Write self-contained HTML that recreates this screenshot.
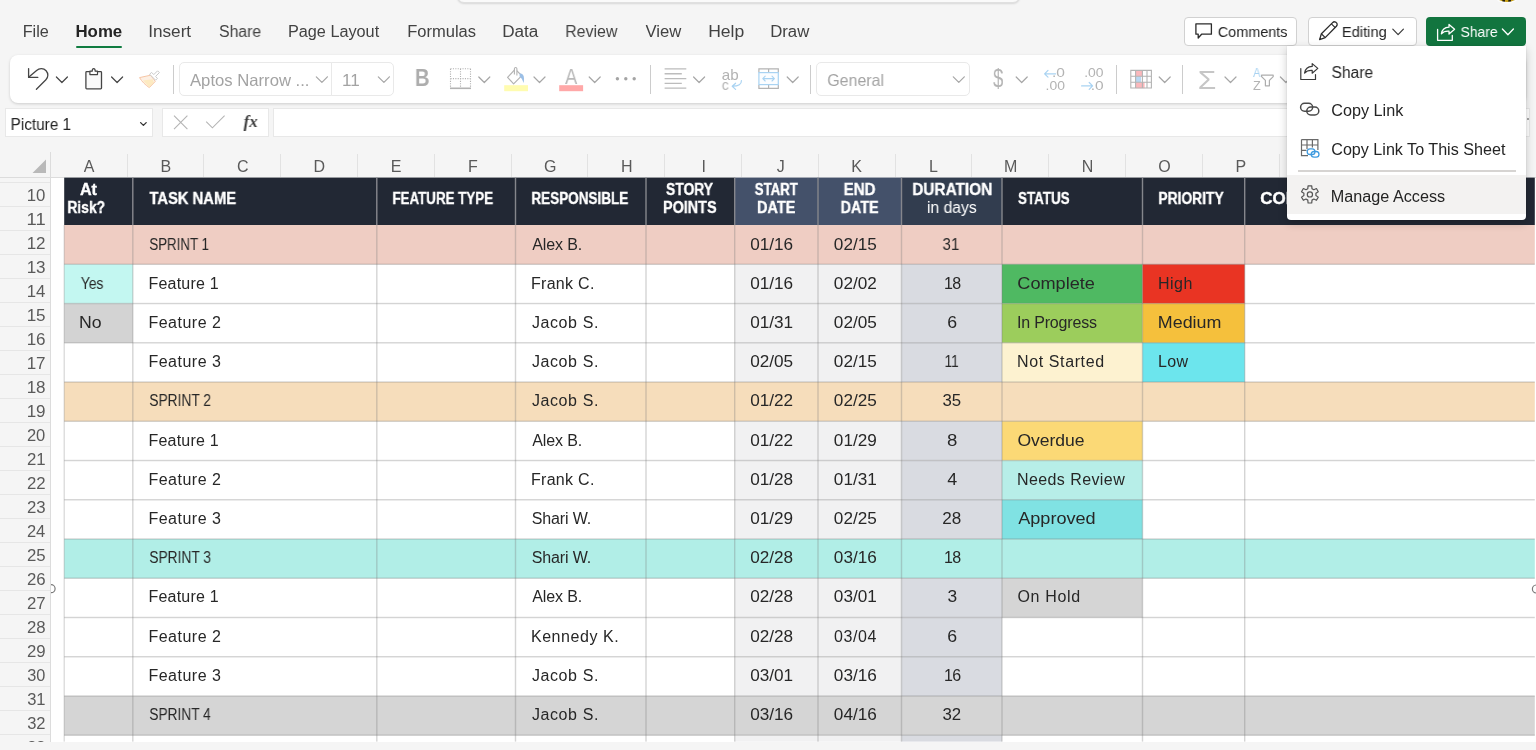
<!DOCTYPE html>
<html lang="en">
<head>
<meta charset="utf-8">
<title>Excel - Sprint Plan</title>
<style>
html,body{margin:0;padding:0;}
body{width:1536px;height:750px;overflow:hidden;background:#f5f5f5;font-family:"Liberation Sans",sans-serif;}
#app{position:relative;width:1536px;height:750px;overflow:hidden;background:#f5f5f5;}
#app div,#app span.t,#app svg{position:absolute;}
span.t{left:0;top:0;white-space:pre;transform-origin:0 50%;display:block;will-change:transform;}
#menu span.t{}
span.hb{-webkit-text-stroke:0.35px #fff;}

</style>
</head>
<body>
<div id="app">
<div style="left:457px;top:-30px;width:563px;height:33px;background:#fafafa;border:1px solid #e0e0e0;border-radius:7px;box-shadow:0 1px 2px rgba(0,0,0,.12);box-sizing:border-box"></div>
<div style="left:1491px;top:-30.5px;width:32px;height:32px;border-radius:50%;background:repeating-linear-gradient(90deg,#2a2205 0 2px,#c9a013 2px 4.5px,#5a4a08 4.5px 6px);box-shadow:0 0 0 1.5px #fbfbfb"></div>
<span class="t" style="font-size:16px;line-height:20px;color:#424242;transform:translate(22.63px,22px) scaleX(1.0133);">File</span>
<span class="t" style="font-size:16px;line-height:20px;color:#424242;transform:translate(148.16px,22px) scaleX(1.0742);">Insert</span>
<span class="t" style="font-size:16px;line-height:20px;color:#424242;transform:translate(219.01px,22px) scaleX(0.9868);">Share</span>
<span class="t" style="font-size:16px;line-height:20px;color:#424242;transform:translate(287.93px,22px) scaleX(1.0152);">Page Layout</span>
<span class="t" style="font-size:16px;line-height:20px;color:#424242;transform:translate(407.21px,22px) scaleX(1.0319);">Formulas</span>
<span class="t" style="font-size:16px;line-height:20px;color:#424242;transform:translate(502.16px,22px) scaleX(1.0720);">Data</span>
<span class="t" style="font-size:16px;line-height:20px;color:#424242;transform:translate(565.26px,22px) scaleX(0.9921);">Review</span>
<span class="t" style="font-size:16px;line-height:20px;color:#424242;transform:translate(645.50px,22px) scaleX(1.0409);">View</span>
<span class="t" style="font-size:16px;line-height:20px;color:#424242;transform:translate(708.13px,22px) scaleX(1.0965);">Help</span>
<span class="t" style="font-size:16px;line-height:20px;color:#424242;transform:translate(770.19px,22px) scaleX(1.0474);">Draw</span>
<span class="t" style="font-size:16px;line-height:20px;color:#242424;font-weight:700;transform:translate(75.45px,22px) scaleX(1.0522);">Home</span>
<div style="left:76px;top:45.5px;width:45.5px;height:2.5px;background:#107c41;border-radius:1px;"></div>
<div style="left:1184px;top:17px;width:113px;height:28.5px;background:#fff;box-sizing:border-box;border:1px solid #d1d1d1;border-radius:4px;"></div>
<div style="left:1308px;top:17px;width:108.5px;height:28.5px;background:#fff;box-sizing:border-box;border:1px solid #d1d1d1;border-radius:4px;"></div>
<div style="left:1426px;top:17px;width:100px;height:28.5px;background:#12753f;border-radius:4px;"></div>
<span class="t" style="font-size:15px;line-height:19px;color:#242424;transform:translate(1217.82px,22px) scaleX(0.9601);">Comments</span>
<span class="t" style="font-size:15px;line-height:19px;color:#242424;transform:translate(1341.85px,22px) scaleX(0.9806);">Editing</span>
<span class="t" style="font-size:15px;line-height:19px;color:#fff;transform:translate(1460.57px,22px) scaleX(0.9243);">Share</span>
<div style="left:10px;top:55px;width:1516px;height:48px;background:#fff;border-radius:8px;box-shadow:0 1px 3px rgba(0,0,0,.17);"></div>
<div style="left:173px;top:65px;width:1px;height:28.5px;background:#cccccc;"></div>
<div style="left:650px;top:65px;width:1px;height:28.5px;background:#cccccc;"></div>
<div style="left:810px;top:65px;width:1px;height:28.5px;background:#cccccc;"></div>
<div style="left:1116px;top:65px;width:1px;height:28.5px;background:#cccccc;"></div>
<div style="left:1182px;top:65px;width:1px;height:28.5px;background:#cccccc;"></div>
<div style="left:179px;top:62px;width:153px;height:34px;background:#fff;box-sizing:border-box;border:1px solid #e9e9e9;border-radius:5px 0 0 5px;"></div>
<div style="left:331px;top:62px;width:63px;height:34px;background:#fff;box-sizing:border-box;border:1px solid #e9e9e9;border-radius:0 5px 5px 0;"></div>
<div style="left:816px;top:62px;width:154px;height:34px;background:#fff;box-sizing:border-box;border:1px solid #e9e9e9;border-radius:5px;"></div>
<span class="t" style="font-size:16.5px;line-height:21px;color:#a3a3a3;transform:translate(190.00px,70px) scaleX(1.0103);">Aptos Narrow ...</span>
<span class="t" style="font-size:16.5px;line-height:21px;color:#a3a3a3;transform:translate(341.93px,70px) scaleX(1.0370);">11</span>
<span class="t" style="font-size:16.5px;line-height:21px;color:#a3a3a3;transform:translate(827.25px,70px) scaleX(0.9676);">General</span>
<span class="t" style="font-size:23.5px;line-height:29px;color:#adadad;font-weight:700;transform:translate(414.94px,64px) scaleX(0.8579);">B</span>
<svg style="left:0;top:55px" width="1536" height="50" viewBox="0 55 1536 50" fill="none">
<path d="M28.6 68.6V77.4H37.8" stroke="#454545" stroke-width="1.3" stroke-linecap="round" stroke-linejoin="round"/>
<path d="M28.9 77.1L36.6 70.4C39.4 67.9 43.6 68 46.1 70.7C48.5 73.3 48.4 77.3 45.9 79.8L36.4 89.3" stroke="#454545" stroke-width="1.3" stroke-linecap="round" stroke-linejoin="round"/>
<path d="M56.4 77.0L61.9 82.5L67.4 77.0" fill="none" stroke="#454545" stroke-width="1.2" stroke-linecap="round" stroke-linejoin="round"/>
<rect x="85.9" y="71.6" width="15.6" height="17.3" rx="0.8" fill="#fafafa" stroke="#454545" stroke-width="1.3"/>
<path d="M89.9 74.6V71.2H92.2C92.2 69.6 93 68.6 93.7 68.6C94.4 68.6 95.2 69.6 95.2 71.2H97.5V74.6Z" fill="#fff" stroke="#454545" stroke-width="1.2" stroke-linejoin="round"/>
<path d="M111.6 77.0L117.1 82.5L122.6 77.0" fill="none" stroke="#454545" stroke-width="1.2" stroke-linecap="round" stroke-linejoin="round"/>
<path d="M139.5 77.6L150.6 75.2L155.3 81.4L149.3 87.6C146 85.5 141.8 81.6 139.5 77.6Z" fill="#fdf0e4" stroke="#f6c6a6" stroke-width="1"/>
<path d="M143 80.6L152.6 79.2L153.8 82.6L149.2 87.2Z" fill="#fde9b8" opacity=".8"/>
<path d="M149.6 74.2L151.6 72.4L153.8 74.6L157.6 70.8L159.4 72.6L155.6 76.4L157.4 78.4L155.6 80.2Z" fill="#fff" stroke="#c9c9c9" stroke-width="1" stroke-linejoin="round"/>
<path d="M316.3 76.8L321.9 82.4L327.4 76.8" fill="none" stroke="#a6a6a6" stroke-width="1.2" stroke-linecap="round" stroke-linejoin="round"/>
<path d="M378.3 76.8L383.9 82.4L389.4 76.8" fill="none" stroke="#a6a6a6" stroke-width="1.2" stroke-linecap="round" stroke-linejoin="round"/>
<path d="M450.5 68.8H470.5M450.5 78.6H470.5M450.5 68.8V87.6M460.5 68.8V87.6M470.5 68.8V87.6" stroke="#b3b3b3" stroke-width="1.1" stroke-dasharray="1.1 1.3"/>
<path d="M450 88.3H471" stroke="#b3b3b3" stroke-width="1.6"/>
<path d="M478.8 77.0L484.3 82.5L489.8 77.0" fill="none" stroke="#a6a6a6" stroke-width="1.2" stroke-linecap="round" stroke-linejoin="round"/>
<path d="M515.2 69.2L507.6 77.4L513.6 83.8L521.8 75.6L515.2 69.2" stroke="#b3b3b3" stroke-width="1.2" stroke-linejoin="round"/>
<path d="M514.4 74.6V68.8C514.4 67 516.9 67 516.9 68.8V75.4" stroke="#b3b3b3" stroke-width="1.1" fill="#fff"/>
<path d="M519.6 73.6C522.4 73.4 524 75.4 524 78.4C524 80.6 523.8 82 523.4 83C522.8 80.2 521.6 78 519.6 76.6Z" fill="#9bbfe6"/>
<rect x="504.2" y="85.2" width="23.8" height="6" fill="#fffcb0"/>
<path d="M534.0 77.0L539.5 82.5L545.0 77.0" fill="none" stroke="#a6a6a6" stroke-width="1.2" stroke-linecap="round" stroke-linejoin="round"/>
<rect x="559.2" y="85.2" width="23.9" height="6" fill="#ffa8a8"/>
<path d="M589.2 77.0L594.7 82.5L600.2 77.0" fill="none" stroke="#a6a6a6" stroke-width="1.2" stroke-linecap="round" stroke-linejoin="round"/>
<circle cx="617.4" cy="78.7" r="1.7" fill="#a4a4a4"/>
<circle cx="625.8" cy="78.7" r="1.7" fill="#a4a4a4"/>
<circle cx="634.2" cy="78.7" r="1.7" fill="#a4a4a4"/>
<path d="M664.6 68.9H686.3M664.6 73.75H681.8M664.6 78.6H686.3M664.6 83.4H681.8M664.6 88.2H686.3" stroke="#bcbcbc" stroke-width="1.3"/>
<path d="M693.6 77.0L699.1 82.5L704.6 77.0" fill="none" stroke="#a6a6a6" stroke-width="1.2" stroke-linecap="round" stroke-linejoin="round"/>
<path d="M741.4 80.6C741.6 84.2 738.6 86.2 732.6 86.2M735.6 83.2L732.2 86.2L735.6 89.4" stroke="#a9d3f2" stroke-width="1.2" stroke-linecap="round" stroke-linejoin="round"/>
<path d="M758.9 72.4V68.9H778.3V72.4M768.6 68.9V72.4M758.9 84.8V88.3H778.3V84.8M768.6 84.8V88.3" stroke="#b3b3b3" stroke-width="1.2"/>
<rect x="758.9" y="72.6" width="19.4" height="12" fill="#fbfdff" stroke="#a9d3f2" stroke-width="1.2"/>
<path d="M762.8 78.6H774.4M765.2 76.2L762.8 78.6L765.2 81M772 76.2L774.4 78.6L772 81" stroke="#a9d3f2" stroke-width="1.1" stroke-linecap="round" stroke-linejoin="round"/>
<path d="M787.2 77.0L792.7 82.5L798.2 77.0" fill="none" stroke="#a6a6a6" stroke-width="1.2" stroke-linecap="round" stroke-linejoin="round"/>
<path d="M953.3 76.8L958.8 82.4L964.3 76.8" fill="none" stroke="#a6a6a6" stroke-width="1.2" stroke-linecap="round" stroke-linejoin="round"/>
<path d="M1016.2 77.0L1021.7 82.5L1027.2 77.0" fill="none" stroke="#a6a6a6" stroke-width="1.2" stroke-linecap="round" stroke-linejoin="round"/>
<path d="M1044.6 73.8H1055.6M1048 70.4L1044.6 73.8L1048 77.2" stroke="#a9d3f2" stroke-width="1.2" stroke-linecap="round" stroke-linejoin="round"/>
<path d="M1081.6 85.9H1092.6M1089.2 82.5L1092.6 85.9L1089.2 89.3" stroke="#a9d3f2" stroke-width="1.2" stroke-linecap="round" stroke-linejoin="round"/>
<rect x="1135.6" y="70.4" width="6.6" height="6" fill="#fbb8bc"/><rect x="1135.6" y="76.6" width="5.4" height="5.6" fill="#b9d8f3"/><rect x="1135.6" y="82.4" width="9" height="5.8" fill="#fbb8bc"/>
<path d="M1130.8 70.4H1151.4V88H1130.8ZM1130.8 76.3H1151.4M1130.8 82.2H1151.4M1135.6 70.4V88M1142.4 70.4V88M1147 70.4V88" stroke="#b3b3b3" stroke-width="1.1"/>
<path d="M1159.2 77.0L1164.7 82.5L1170.2 77.0" fill="none" stroke="#a6a6a6" stroke-width="1.2" stroke-linecap="round" stroke-linejoin="round"/>
<path d="M1225.0 77.0L1230.5 82.5L1236.0 77.0" fill="none" stroke="#a6a6a6" stroke-width="1.2" stroke-linecap="round" stroke-linejoin="round"/>
<path d="M1261.6 75.2H1273.2V76.6L1269.4 80.4V85.8H1265.4V80.4L1261.6 76.6Z" fill="#fff" stroke="#adadad" stroke-width="1.2" stroke-linejoin="round"/>
<path d="M1280.4 77.0L1285.9 82.5L1291.4 77.0" fill="none" stroke="#a6a6a6" stroke-width="1.2" stroke-linecap="round" stroke-linejoin="round"/>
</svg>
<span class="t" style="font-size:15px;line-height:19px;color:#b3b3b3;transform:translate(721.73px,65px) scaleX(1.0123);">ab</span>
<span class="t" style="font-size:15px;line-height:19px;color:#b3b3b3;transform:translate(721.76px,75px) scaleX(0.9416);">c</span>
<span class="t" style="font-size:25px;line-height:31px;color:#b4b4b4;transform:translate(993.00px,63px) scaleX(0.7461);">$</span>
<span class="t" style="font-size:12.5px;line-height:16px;color:#b3b3b3;transform:translate(1052.04px,65px) scaleX(1.2397);">.0</span>
<span class="t" style="font-size:12.5px;line-height:16px;color:#b3b3b3;transform:translate(1045.58px,78px) scaleX(1.1122);">.00</span>
<span class="t" style="font-size:12.5px;line-height:16px;color:#b3b3b3;transform:translate(1084.18px,65px) scaleX(1.1122);">.00</span>
<span class="t" style="font-size:12.5px;line-height:16px;color:#b3b3b3;transform:translate(1090.64px,78px) scaleX(1.2397);">.0</span>
<span class="t" style="font-size:12.5px;line-height:16px;color:#a9d3f2;transform:translate(1253.00px,65px) scaleX(0.9102);">A</span>
<span class="t" style="font-size:12.5px;line-height:16px;color:#b3b3b3;transform:translate(1253.04px,78px) scaleX(1.0145);">Z</span>
<span class="t" style="font-size:21.5px;line-height:27px;color:#b9b9b9;transform:translate(565.00px,64px) scaleX(0.8584);">A</span>
<span class="t" style="font-size:25.5px;line-height:32px;color:#c6c6c6;transform:translate(1197.79px,64px) scaleX(1.1760);">Σ</span>
<div style="left:5px;top:108px;width:148px;height:28.5px;background:#fff;box-sizing:border-box;border:1px solid #e8e8e8;"></div>
<div style="left:162px;top:108px;width:106.5px;height:28.5px;background:#fff;box-sizing:border-box;border:1px solid #e8e8e8;"></div>
<div style="left:273px;top:108px;width:1257px;height:28.5px;background:#fff;box-sizing:border-box;border:1px solid #e8e8e8;"></div>
<span class="t" style="font-size:16px;line-height:20px;color:#242424;transform:translate(10.60px,115px) scaleX(0.9569);">Picture 1</span>
<span class="t" style="font-size:17px;line-height:21px;color:#3b3b3b;font-weight:700;font-style:italic;font-family:'Liberation Serif', serif;transform:translate(243.60px,111px) scaleX(0.9859);">fx</span>
<svg style="left:0;top:105px" width="1536" height="36" viewBox="0 105 1536 36" fill="none">
<path d="M140.6 122.6L143.4 125.4L146.2 122.6" stroke="#333" stroke-width="1.3" stroke-linecap="round" stroke-linejoin="round"/>
<path d="M174 115.6L187.4 129.2M187.4 115.6L174 129.2" stroke="#b4b4b4" stroke-width="1.1"/>
<path d="M206.2 121.6L212.4 127.8L224.6 115.6" stroke="#b4b4b4" stroke-width="1.1"/>
</svg>
<div style="left:50px;top:152px;width:1486px;height:26px;background:#f5f5f5;"></div>
<div style="left:50.5px;top:177px;width:1486px;height:565px;background:#fff;"></div>
<div style="left:0px;top:176.5px;width:1536px;height:1px;background:#dcdcdc;"></div>
<div style="left:50px;top:152px;width:1px;height:590px;background:#dcdcdc;"></div>
<span class="t" style="font-size:16px;line-height:20px;color:#5a5a5a;transform:translate(83.82px,157px);">A</span>
<div style="left:126.6px;top:154px;width:1px;height:23px;background:#e2e2e2;"></div>
<span class="t" style="font-size:16px;line-height:20px;color:#5a5a5a;transform:translate(160.38px,157px);">B</span>
<div style="left:203.4px;top:154px;width:1px;height:23px;background:#e2e2e2;"></div>
<span class="t" style="font-size:16px;line-height:20px;color:#5a5a5a;transform:translate(236.93px,157px);">C</span>
<div style="left:280.2px;top:154px;width:1px;height:23px;background:#e2e2e2;"></div>
<span class="t" style="font-size:16px;line-height:20px;color:#5a5a5a;transform:translate(313.48px,157px);">D</span>
<div style="left:357.0px;top:154px;width:1px;height:23px;background:#e2e2e2;"></div>
<span class="t" style="font-size:16px;line-height:20px;color:#5a5a5a;transform:translate(390.77px,157px);">E</span>
<div style="left:433.8px;top:154px;width:1px;height:23px;background:#e2e2e2;"></div>
<span class="t" style="font-size:16px;line-height:20px;color:#5a5a5a;transform:translate(467.95px,157px);">F</span>
<div style="left:510.6px;top:154px;width:1px;height:23px;background:#e2e2e2;"></div>
<span class="t" style="font-size:16px;line-height:20px;color:#5a5a5a;transform:translate(544.00px,157px);">G</span>
<div style="left:587.4px;top:154px;width:1px;height:23px;background:#e2e2e2;"></div>
<span class="t" style="font-size:16px;line-height:20px;color:#5a5a5a;transform:translate(621.05px,157px);">H</span>
<div style="left:664.2px;top:154px;width:1px;height:23px;background:#e2e2e2;"></div>
<span class="t" style="font-size:16px;line-height:20px;color:#5a5a5a;transform:translate(701.47px,157px);">I</span>
<div style="left:741.0px;top:154px;width:1px;height:23px;background:#e2e2e2;"></div>
<span class="t" style="font-size:16px;line-height:20px;color:#5a5a5a;transform:translate(776.77px,157px);">J</span>
<div style="left:817.8px;top:154px;width:1px;height:23px;background:#e2e2e2;"></div>
<span class="t" style="font-size:16px;line-height:20px;color:#5a5a5a;transform:translate(851.32px,157px);">K</span>
<div style="left:894.6px;top:154px;width:1px;height:23px;background:#e2e2e2;"></div>
<span class="t" style="font-size:16px;line-height:20px;color:#5a5a5a;transform:translate(929.12px,157px);">L</span>
<div style="left:971.4px;top:154px;width:1px;height:23px;background:#e2e2e2;"></div>
<span class="t" style="font-size:16px;line-height:20px;color:#5a5a5a;transform:translate(1004.05px,157px);">M</span>
<div style="left:1048.2px;top:154px;width:1px;height:23px;background:#e2e2e2;"></div>
<span class="t" style="font-size:16px;line-height:20px;color:#5a5a5a;transform:translate(1081.85px,157px);">N</span>
<div style="left:1125.0px;top:154px;width:1px;height:23px;background:#e2e2e2;"></div>
<span class="t" style="font-size:16px;line-height:20px;color:#5a5a5a;transform:translate(1158.15px,157px);">O</span>
<div style="left:1201.8px;top:154px;width:1px;height:23px;background:#e2e2e2;"></div>
<span class="t" style="font-size:16px;line-height:20px;color:#5a5a5a;transform:translate(1235.57px,157px);">P</span>
<div style="left:1278.6px;top:154px;width:1px;height:23px;background:#e2e2e2;"></div>
<span class="t" style="font-size:16px;line-height:20px;color:#5a5a5a;transform:translate(1311.75px,157px);">Q</span>
<div style="left:1355.4px;top:154px;width:1px;height:23px;background:#e2e2e2;"></div>
<span class="t" style="font-size:16px;line-height:20px;color:#5a5a5a;transform:translate(1388.67px,157px);">R</span>
<div style="left:1432.2px;top:154px;width:1px;height:23px;background:#e2e2e2;"></div>
<span class="t" style="font-size:16px;line-height:20px;color:#5a5a5a;transform:translate(1466.35px,157px);">S</span>
<div style="left:1509.0px;top:154px;width:1px;height:23px;background:#e2e2e2;"></div>
<span class="t" style="font-size:16px;line-height:20px;color:#5a5a5a;transform:translate(1543.52px,157px);">T</span>
<svg style="left:31px;top:158px" width="16" height="16" viewBox="0 0 16 16"><path d="M15 1.5V15H1.5Z" fill="#b9b9b9"/></svg>
<div style="left:0px;top:181.5px;width:50px;height:1px;background:#e6e6e6;"></div>
<span class="t" style="font-size:16px;line-height:20px;color:#5a5a5a;transform:translate(26.65px,186px) scaleX(1.0489);">10</span>
<div style="left:0px;top:205.5px;width:50px;height:1px;background:#e6e6e6;"></div>
<span class="t" style="font-size:16px;line-height:20px;color:#5a5a5a;transform:translate(26.55px,210px) scaleX(1.1497);">11</span>
<div style="left:0px;top:229.5px;width:50px;height:1px;background:#e6e6e6;"></div>
<span class="t" style="font-size:16px;line-height:20px;color:#5a5a5a;transform:translate(26.63px,234px) scaleX(1.0651);">12</span>
<div style="left:0px;top:253.5px;width:50px;height:1px;background:#e6e6e6;"></div>
<span class="t" style="font-size:16px;line-height:20px;color:#5a5a5a;transform:translate(26.63px,258px) scaleX(1.0651);">13</span>
<div style="left:0px;top:277.5px;width:50px;height:1px;background:#e6e6e6;"></div>
<span class="t" style="font-size:16px;line-height:20px;color:#5a5a5a;transform:translate(26.65px,282px) scaleX(1.0489);">14</span>
<div style="left:0px;top:301.5px;width:50px;height:1px;background:#e6e6e6;"></div>
<span class="t" style="font-size:16px;line-height:20px;color:#5a5a5a;transform:translate(26.63px,306px) scaleX(1.0651);">15</span>
<div style="left:0px;top:325.5px;width:50px;height:1px;background:#e6e6e6;"></div>
<span class="t" style="font-size:16px;line-height:20px;color:#5a5a5a;transform:translate(26.63px,330px) scaleX(1.0651);">16</span>
<div style="left:0px;top:349.5px;width:50px;height:1px;background:#e6e6e6;"></div>
<span class="t" style="font-size:16px;line-height:20px;color:#5a5a5a;transform:translate(26.63px,354px) scaleX(1.0651);">17</span>
<div style="left:0px;top:373.5px;width:50px;height:1px;background:#e6e6e6;"></div>
<span class="t" style="font-size:16px;line-height:20px;color:#5a5a5a;transform:translate(26.63px,378px) scaleX(1.0651);">18</span>
<div style="left:0px;top:397.5px;width:50px;height:1px;background:#e6e6e6;"></div>
<span class="t" style="font-size:16px;line-height:20px;color:#5a5a5a;transform:translate(26.63px,402px) scaleX(1.0651);">19</span>
<div style="left:0px;top:421.5px;width:50px;height:1px;background:#e6e6e6;"></div>
<span class="t" style="font-size:16px;line-height:20px;color:#5a5a5a;transform:translate(26.93px,426px) scaleX(1.0331);">20</span>
<div style="left:0px;top:445.5px;width:50px;height:1px;background:#e6e6e6;"></div>
<span class="t" style="font-size:16px;line-height:20px;color:#5a5a5a;transform:translate(26.91px,450px) scaleX(1.0489);">21</span>
<div style="left:0px;top:469.5px;width:50px;height:1px;background:#e6e6e6;"></div>
<span class="t" style="font-size:16px;line-height:20px;color:#5a5a5a;transform:translate(26.91px,474px) scaleX(1.0489);">22</span>
<div style="left:0px;top:493.5px;width:50px;height:1px;background:#e6e6e6;"></div>
<span class="t" style="font-size:16px;line-height:20px;color:#5a5a5a;transform:translate(26.91px,498px) scaleX(1.0489);">23</span>
<div style="left:0px;top:517.5px;width:50px;height:1px;background:#e6e6e6;"></div>
<span class="t" style="font-size:16px;line-height:20px;color:#5a5a5a;transform:translate(26.93px,522px) scaleX(1.0331);">24</span>
<div style="left:0px;top:541.5px;width:50px;height:1px;background:#e6e6e6;"></div>
<span class="t" style="font-size:16px;line-height:20px;color:#5a5a5a;transform:translate(26.91px,546px) scaleX(1.0489);">25</span>
<div style="left:0px;top:565.5px;width:50px;height:1px;background:#e6e6e6;"></div>
<span class="t" style="font-size:16px;line-height:20px;color:#5a5a5a;transform:translate(26.91px,570px) scaleX(1.0489);">26</span>
<div style="left:0px;top:589.5px;width:50px;height:1px;background:#e6e6e6;"></div>
<span class="t" style="font-size:16px;line-height:20px;color:#5a5a5a;transform:translate(26.91px,594px) scaleX(1.0489);">27</span>
<div style="left:0px;top:613.5px;width:50px;height:1px;background:#e6e6e6;"></div>
<span class="t" style="font-size:16px;line-height:20px;color:#5a5a5a;transform:translate(26.91px,618px) scaleX(1.0489);">28</span>
<div style="left:0px;top:637.5px;width:50px;height:1px;background:#e6e6e6;"></div>
<span class="t" style="font-size:16px;line-height:20px;color:#5a5a5a;transform:translate(26.91px,642px) scaleX(1.0489);">29</span>
<div style="left:0px;top:661.5px;width:50px;height:1px;background:#e6e6e6;"></div>
<span class="t" style="font-size:16px;line-height:20px;color:#5a5a5a;transform:translate(27.19px,666px) scaleX(1.0178);">30</span>
<div style="left:0px;top:685.5px;width:50px;height:1px;background:#e6e6e6;"></div>
<span class="t" style="font-size:16px;line-height:20px;color:#5a5a5a;transform:translate(27.18px,690px) scaleX(1.0331);">31</span>
<div style="left:0px;top:709.5px;width:50px;height:1px;background:#e6e6e6;"></div>
<span class="t" style="font-size:16px;line-height:20px;color:#5a5a5a;transform:translate(27.18px,714px) scaleX(1.0331);">32</span>
<div style="left:0px;top:733.5px;width:50px;height:1px;background:#e6e6e6;"></div>
<span class="t" style="font-size:16px;line-height:20px;color:#5a5a5a;transform:translate(27.18px,738px) scaleX(1.0331);">33</span>
<svg style="left:0;top:170px" width="1536" height="580" viewBox="0 170 1536 580">
<rect x="64.20" y="177.60" width="1470.60" height="564.00" fill="#fff"/>
<rect x="64.20" y="177.60" width="68.60" height="47.50" fill="#222834"/>
<rect x="132.80" y="177.60" width="244.00" height="47.50" fill="#222834"/>
<rect x="376.80" y="177.60" width="138.70" height="47.50" fill="#222834"/>
<rect x="515.50" y="177.60" width="130.50" height="47.50" fill="#222834"/>
<rect x="646.00" y="177.60" width="88.70" height="47.50" fill="#222834"/>
<rect x="734.70" y="177.60" width="83.30" height="47.50" fill="#44516a"/>
<rect x="818.00" y="177.60" width="83.50" height="47.50" fill="#44516a"/>
<rect x="901.50" y="177.60" width="100.50" height="47.50" fill="#323d4f"/>
<rect x="1002.00" y="177.60" width="140.50" height="47.50" fill="#222834"/>
<rect x="1142.50" y="177.60" width="102.20" height="47.50" fill="#222834"/>
<rect x="1244.70" y="177.60" width="290.10" height="47.50" fill="#222834"/>
<rect x="64.20" y="225.05" width="1470.60" height="39.25" fill="#efcdc3"/>
<rect x="734.70" y="264.30" width="166.80" height="39.25" fill="#f1f1f2"/>
<rect x="901.50" y="264.30" width="100.50" height="39.25" fill="#d9dbe1"/>
<rect x="64.20" y="264.30" width="68.60" height="39.25" fill="#c3f7f1"/>
<rect x="1002.00" y="264.30" width="140.50" height="39.25" fill="#4fb962"/>
<rect x="1142.50" y="264.30" width="102.20" height="39.25" fill="#e93423"/>
<rect x="734.70" y="303.54" width="166.80" height="39.24" fill="#f1f1f2"/>
<rect x="901.50" y="303.54" width="100.50" height="39.24" fill="#d9dbe1"/>
<rect x="64.20" y="303.54" width="68.60" height="39.24" fill="#d3d3d3"/>
<rect x="1002.00" y="303.54" width="140.50" height="39.24" fill="#9ccd5c"/>
<rect x="1142.50" y="303.54" width="102.20" height="39.24" fill="#f5c03c"/>
<rect x="734.70" y="342.78" width="166.80" height="39.25" fill="#f1f1f2"/>
<rect x="901.50" y="342.78" width="100.50" height="39.25" fill="#d9dbe1"/>
<rect x="1002.00" y="342.78" width="140.50" height="39.25" fill="#fdf2d0"/>
<rect x="1142.50" y="342.78" width="102.20" height="39.25" fill="#6ce5ed"/>
<rect x="64.20" y="382.03" width="1470.60" height="39.25" fill="#f6ddbb"/>
<rect x="734.70" y="421.27" width="166.80" height="39.25" fill="#f1f1f2"/>
<rect x="901.50" y="421.27" width="100.50" height="39.25" fill="#d9dbe1"/>
<rect x="1002.00" y="421.27" width="140.50" height="39.25" fill="#fbd976"/>
<rect x="734.70" y="460.52" width="166.80" height="39.25" fill="#f1f1f2"/>
<rect x="901.50" y="460.52" width="100.50" height="39.25" fill="#d9dbe1"/>
<rect x="1002.00" y="460.52" width="140.50" height="39.25" fill="#b7eee8"/>
<rect x="734.70" y="499.76" width="166.80" height="39.25" fill="#f1f1f2"/>
<rect x="901.50" y="499.76" width="100.50" height="39.25" fill="#d9dbe1"/>
<rect x="1002.00" y="499.76" width="140.50" height="39.25" fill="#80e2e3"/>
<rect x="64.20" y="539.01" width="1470.60" height="39.25" fill="#b1eee7"/>
<rect x="734.70" y="578.25" width="166.80" height="39.25" fill="#f1f1f2"/>
<rect x="901.50" y="578.25" width="100.50" height="39.25" fill="#d9dbe1"/>
<rect x="1002.00" y="578.25" width="140.50" height="39.25" fill="#d5d5d5"/>
<rect x="734.70" y="617.50" width="166.80" height="39.25" fill="#f1f1f2"/>
<rect x="901.50" y="617.50" width="100.50" height="39.25" fill="#d9dbe1"/>
<rect x="734.70" y="656.75" width="166.80" height="39.25" fill="#f1f1f2"/>
<rect x="901.50" y="656.75" width="100.50" height="39.25" fill="#d9dbe1"/>
<rect x="64.20" y="695.99" width="1470.60" height="39.24" fill="#d5d5d5"/>
<rect x="734.70" y="735.23" width="166.80" height="6.37" fill="#f1f1f2"/>
<rect x="901.50" y="735.23" width="100.50" height="6.37" fill="#d9dbe1"/>
<rect x="64.20" y="263.60" width="1470.60" height="1.40" fill="rgba(120,120,120,.32)"/>
<rect x="64.20" y="302.84" width="1470.60" height="1.40" fill="rgba(120,120,120,.32)"/>
<rect x="64.20" y="342.08" width="1470.60" height="1.40" fill="rgba(120,120,120,.32)"/>
<rect x="64.20" y="381.33" width="1470.60" height="1.40" fill="rgba(120,120,120,.32)"/>
<rect x="64.20" y="420.57" width="1470.60" height="1.40" fill="rgba(120,120,120,.32)"/>
<rect x="64.20" y="459.82" width="1470.60" height="1.40" fill="rgba(120,120,120,.32)"/>
<rect x="64.20" y="499.06" width="1470.60" height="1.40" fill="rgba(120,120,120,.32)"/>
<rect x="64.20" y="538.31" width="1470.60" height="1.40" fill="rgba(120,120,120,.32)"/>
<rect x="64.20" y="577.55" width="1470.60" height="1.40" fill="rgba(120,120,120,.32)"/>
<rect x="64.20" y="616.80" width="1470.60" height="1.40" fill="rgba(120,120,120,.32)"/>
<rect x="64.20" y="656.04" width="1470.60" height="1.40" fill="rgba(120,120,120,.32)"/>
<rect x="64.20" y="695.29" width="1470.60" height="1.40" fill="rgba(120,120,120,.32)"/>
<rect x="64.20" y="734.53" width="1470.60" height="1.40" fill="rgba(120,120,120,.32)"/>
<rect x="132.10" y="177.60" width="1.40" height="47.50" fill="#85868c"/>
<rect x="132.10" y="225.10" width="1.40" height="516.50" fill="rgba(120,120,120,.32)"/>
<rect x="376.10" y="177.60" width="1.40" height="47.50" fill="#85868c"/>
<rect x="376.10" y="225.10" width="1.40" height="516.50" fill="rgba(120,120,120,.32)"/>
<rect x="514.80" y="177.60" width="1.40" height="47.50" fill="#85868c"/>
<rect x="514.80" y="225.10" width="1.40" height="516.50" fill="rgba(120,120,120,.32)"/>
<rect x="645.30" y="177.60" width="1.40" height="47.50" fill="#85868c"/>
<rect x="645.30" y="225.10" width="1.40" height="516.50" fill="rgba(120,120,120,.32)"/>
<rect x="734.00" y="177.60" width="1.40" height="47.50" fill="#85868c"/>
<rect x="734.00" y="225.10" width="1.40" height="516.50" fill="rgba(120,120,120,.32)"/>
<rect x="817.30" y="177.60" width="1.40" height="47.50" fill="#85868c"/>
<rect x="817.30" y="225.10" width="1.40" height="516.50" fill="rgba(120,120,120,.32)"/>
<rect x="900.80" y="177.60" width="1.40" height="47.50" fill="#85868c"/>
<rect x="900.80" y="225.10" width="1.40" height="516.50" fill="rgba(120,120,120,.32)"/>
<rect x="1001.30" y="177.60" width="1.40" height="47.50" fill="#85868c"/>
<rect x="1001.30" y="225.10" width="1.40" height="516.50" fill="rgba(120,120,120,.32)"/>
<rect x="1141.80" y="177.60" width="1.40" height="47.50" fill="#85868c"/>
<rect x="1141.80" y="225.10" width="1.40" height="516.50" fill="rgba(120,120,120,.32)"/>
<rect x="1244.00" y="177.60" width="1.40" height="47.50" fill="#85868c"/>
<rect x="1244.00" y="225.10" width="1.40" height="516.50" fill="rgba(120,120,120,.32)"/>
<rect x="63.60" y="225.10" width="1.20" height="516.50" fill="rgba(120,120,120,.3)"/>
</svg>
<span class="t" style="font-size:16px;line-height:20px;color:#272727;transform:translate(149.28px,235px) scaleX(0.8325);">SPRINT 1</span>
<span class="t" style="font-size:16px;line-height:20px;color:#272727;letter-spacing:-0.124px;transform:translate(532.20px,235px);">Alex B.</span>
<span class="t" style="font-size:16px;line-height:20px;color:#272727;transform:translate(750.16px,235px) scaleX(1.0722);">01/16</span>
<span class="t" style="font-size:16px;line-height:20px;color:#272727;transform:translate(833.86px,235px) scaleX(1.0722);">02/15</span>
<span class="t" style="font-size:16px;line-height:20px;color:#272727;transform:translate(942.53px,235px) scaleX(0.9370);">31</span>
<span class="t" style="font-size:16px;line-height:20px;color:#272727;transform:translate(80.78px,274px) scaleX(0.8678);">Yes</span>
<span class="t" style="font-size:16px;line-height:20px;color:#272727;letter-spacing:0.214px;transform:translate(148.45px,274px);">Feature 1</span>
<span class="t" style="font-size:16px;line-height:20px;color:#272727;letter-spacing:0.293px;transform:translate(530.95px,274px);">Frank C.</span>
<span class="t" style="font-size:16px;line-height:20px;color:#272727;transform:translate(750.16px,274px) scaleX(1.0722);">01/16</span>
<span class="t" style="font-size:16px;line-height:20px;color:#272727;transform:translate(833.86px,274px) scaleX(1.0722);">02/02</span>
<span class="t" style="font-size:16px;line-height:20px;color:#272727;letter-spacing:-0.548px;transform:translate(943.90px,274px);">18</span>
<span class="t" style="font-size:16px;line-height:20px;color:#272727;transform:translate(1017.35px,274px) scaleX(1.1330);">Complete</span>
<span class="t" style="font-size:16px;line-height:20px;color:#272727;letter-spacing:0.514px;transform:translate(1157.95px,274px);">High</span>
<span class="t" style="font-size:16px;line-height:20px;color:#272727;transform:translate(79.02px,313px) scaleX(1.1048);">No</span>
<span class="t" style="font-size:16px;line-height:20px;color:#272727;letter-spacing:0.489px;transform:translate(148.45px,313px);">Feature 2</span>
<span class="t" style="font-size:16px;line-height:20px;color:#272727;letter-spacing:0.591px;transform:translate(531.95px,313px);">Jacob S.</span>
<span class="t" style="font-size:16px;line-height:20px;color:#272727;transform:translate(750.16px,313px) scaleX(1.0722);">01/31</span>
<span class="t" style="font-size:16px;line-height:20px;color:#272727;transform:translate(833.86px,313px) scaleX(1.0722);">02/05</span>
<span class="t" style="font-size:16px;line-height:20px;color:#272727;transform:translate(947.17px,313px) scaleX(1.1067);">6</span>
<span class="t" style="font-size:16px;line-height:20px;color:#272727;letter-spacing:-0.176px;transform:translate(1016.95px,313px);">In Progress</span>
<span class="t" style="font-size:16px;line-height:20px;color:#272727;transform:translate(1157.80px,313px) scaleX(1.1180);">Medium</span>
<span class="t" style="font-size:16px;line-height:20px;color:#272727;letter-spacing:0.489px;transform:translate(148.45px,352px);">Feature 3</span>
<span class="t" style="font-size:16px;line-height:20px;color:#272727;letter-spacing:0.591px;transform:translate(531.95px,352px);">Jacob S.</span>
<span class="t" style="font-size:16px;line-height:20px;color:#272727;transform:translate(750.16px,352px) scaleX(1.0722);">02/05</span>
<span class="t" style="font-size:16px;line-height:20px;color:#272727;transform:translate(833.86px,352px) scaleX(1.0722);">02/15</span>
<span class="t" style="font-size:16px;line-height:20px;color:#272727;transform:translate(944.55px,352px) scaleX(0.8489);">11</span>
<span class="t" style="font-size:16px;line-height:20px;color:#272727;letter-spacing:0.622px;transform:translate(1016.95px,352px);">Not Started</span>
<span class="t" style="font-size:16px;line-height:20px;color:#272727;letter-spacing:0.352px;transform:translate(1157.95px,352px);">Low</span>
<span class="t" style="font-size:16px;line-height:20px;color:#272727;transform:translate(149.27px,391px) scaleX(0.8608);">SPRINT 2</span>
<span class="t" style="font-size:16px;line-height:20px;color:#272727;letter-spacing:0.591px;transform:translate(531.95px,391px);">Jacob S.</span>
<span class="t" style="font-size:16px;line-height:20px;color:#272727;transform:translate(750.16px,391px) scaleX(1.0722);">01/22</span>
<span class="t" style="font-size:16px;line-height:20px;color:#272727;transform:translate(833.86px,391px) scaleX(1.0722);">02/25</span>
<span class="t" style="font-size:16px;line-height:20px;color:#272727;transform:translate(942.47px,391px) scaleX(1.0511);">35</span>
<span class="t" style="font-size:16px;line-height:20px;color:#272727;letter-spacing:0.214px;transform:translate(148.45px,431px);">Feature 1</span>
<span class="t" style="font-size:16px;line-height:20px;color:#272727;letter-spacing:-0.124px;transform:translate(532.20px,431px);">Alex B.</span>
<span class="t" style="font-size:16px;line-height:20px;color:#272727;transform:translate(750.16px,431px) scaleX(1.0722);">01/22</span>
<span class="t" style="font-size:16px;line-height:20px;color:#272727;transform:translate(833.86px,431px) scaleX(1.0722);">01/29</span>
<span class="t" style="font-size:16px;line-height:20px;color:#272727;transform:translate(947.12px,431px) scaleX(1.1613);">8</span>
<span class="t" style="font-size:16px;line-height:20px;color:#272727;transform:translate(1017.38px,431px) scaleX(1.0956);">Overdue</span>
<span class="t" style="font-size:16px;line-height:20px;color:#272727;letter-spacing:0.489px;transform:translate(148.45px,470px);">Feature 2</span>
<span class="t" style="font-size:16px;line-height:20px;color:#272727;letter-spacing:0.293px;transform:translate(530.95px,470px);">Frank C.</span>
<span class="t" style="font-size:16px;line-height:20px;color:#272727;transform:translate(750.16px,470px) scaleX(1.0722);">01/28</span>
<span class="t" style="font-size:16px;line-height:20px;color:#272727;transform:translate(833.86px,470px) scaleX(1.0722);">01/31</span>
<span class="t" style="font-size:16px;line-height:20px;color:#272727;transform:translate(947.22px,470px) scaleX(1.1152);">4</span>
<span class="t" style="font-size:16px;line-height:20px;color:#272727;letter-spacing:0.418px;transform:translate(1016.95px,470px);">Needs Review</span>
<span class="t" style="font-size:16px;line-height:20px;color:#272727;letter-spacing:0.489px;transform:translate(148.45px,509px);">Feature 3</span>
<span class="t" style="font-size:16px;line-height:20px;color:#272727;letter-spacing:-0.145px;transform:translate(531.70px,509px);">Shari W.</span>
<span class="t" style="font-size:16px;line-height:20px;color:#272727;transform:translate(750.16px,509px) scaleX(1.0722);">01/29</span>
<span class="t" style="font-size:16px;line-height:20px;color:#272727;transform:translate(833.86px,509px) scaleX(1.0722);">02/25</span>
<span class="t" style="font-size:16px;line-height:20px;color:#272727;transform:translate(942.20px,509px) scaleX(1.0672);">28</span>
<span class="t" style="font-size:16px;line-height:20px;color:#272727;transform:translate(1018.20px,509px) scaleX(1.1303);">Approved</span>
<span class="t" style="font-size:16px;line-height:20px;color:#272727;transform:translate(149.27px,548px) scaleX(0.8608);">SPRINT 3</span>
<span class="t" style="font-size:16px;line-height:20px;color:#272727;letter-spacing:-0.145px;transform:translate(531.70px,548px);">Shari W.</span>
<span class="t" style="font-size:16px;line-height:20px;color:#272727;transform:translate(750.16px,548px) scaleX(1.0722);">02/28</span>
<span class="t" style="font-size:16px;line-height:20px;color:#272727;transform:translate(833.86px,548px) scaleX(1.0722);">03/16</span>
<span class="t" style="font-size:16px;line-height:20px;color:#272727;letter-spacing:-0.548px;transform:translate(943.90px,548px);">18</span>
<span class="t" style="font-size:16px;line-height:20px;color:#272727;letter-spacing:0.214px;transform:translate(148.45px,587px);">Feature 1</span>
<span class="t" style="font-size:16px;line-height:20px;color:#272727;letter-spacing:-0.124px;transform:translate(532.20px,587px);">Alex B.</span>
<span class="t" style="font-size:16px;line-height:20px;color:#272727;transform:translate(750.16px,587px) scaleX(1.0722);">02/28</span>
<span class="t" style="font-size:16px;line-height:20px;color:#272727;transform:translate(833.86px,587px) scaleX(1.0722);">03/01</span>
<span class="t" style="font-size:16px;line-height:20px;color:#272727;transform:translate(947.46px,587px) scaleX(1.0839);">3</span>
<span class="t" style="font-size:16px;line-height:20px;color:#272727;letter-spacing:0.659px;transform:translate(1017.45px,587px);">On Hold</span>
<span class="t" style="font-size:16px;line-height:20px;color:#272727;letter-spacing:0.489px;transform:translate(148.45px,627px);">Feature 2</span>
<span class="t" style="font-size:16px;line-height:20px;color:#272727;letter-spacing:0.552px;transform:translate(530.95px,627px);">Kennedy K.</span>
<span class="t" style="font-size:16px;line-height:20px;color:#272727;transform:translate(750.16px,627px) scaleX(1.0722);">02/28</span>
<span class="t" style="font-size:16px;line-height:20px;color:#272727;letter-spacing:0.640px;transform:translate(833.90px,627px);">03/04</span>
<span class="t" style="font-size:16px;line-height:20px;color:#272727;transform:translate(947.17px,627px) scaleX(1.1067);">6</span>
<span class="t" style="font-size:16px;line-height:20px;color:#272727;letter-spacing:0.489px;transform:translate(148.45px,666px);">Feature 3</span>
<span class="t" style="font-size:16px;line-height:20px;color:#272727;letter-spacing:0.591px;transform:translate(531.95px,666px);">Jacob S.</span>
<span class="t" style="font-size:16px;line-height:20px;color:#272727;transform:translate(750.16px,666px) scaleX(1.0722);">03/01</span>
<span class="t" style="font-size:16px;line-height:20px;color:#272727;transform:translate(833.86px,666px) scaleX(1.0722);">03/16</span>
<span class="t" style="font-size:16px;line-height:20px;color:#272727;letter-spacing:-0.548px;transform:translate(943.90px,666px);">16</span>
<span class="t" style="font-size:16px;line-height:20px;color:#272727;transform:translate(149.27px,705px) scaleX(0.8577);">SPRINT 4</span>
<span class="t" style="font-size:16px;line-height:20px;color:#272727;letter-spacing:0.591px;transform:translate(531.95px,705px);">Jacob S.</span>
<span class="t" style="font-size:16px;line-height:20px;color:#272727;transform:translate(750.16px,705px) scaleX(1.0722);">03/16</span>
<span class="t" style="font-size:16px;line-height:20px;color:#272727;transform:translate(833.86px,705px) scaleX(1.0722);">04/16</span>
<span class="t" style="font-size:16px;line-height:20px;color:#272727;transform:translate(942.47px,705px) scaleX(1.0511);">32</span>
<span class="t hb" style="font-size:16px;line-height:20px;color:#fff;font-weight:700;transform:translate(79.90px,180px) scaleX(1.0088);">At</span>
<span class="t hb" style="font-size:16px;line-height:20px;color:#fff;font-weight:700;transform:translate(67.33px,198px) scaleX(0.8661);">Risk?</span>
<span class="t hb" style="font-size:16px;line-height:20px;color:#fff;font-weight:700;transform:translate(149.40px,189px) scaleX(0.9230);">TASK NAME</span>
<span class="t hb" style="font-size:16px;line-height:20px;color:#fff;font-weight:700;transform:translate(392.37px,189px) scaleX(0.8349);">FEATURE TYPE</span>
<span class="t hb" style="font-size:16px;line-height:20px;color:#fff;font-weight:700;transform:translate(531.36px,189px) scaleX(0.8449);">RESPONSIBLE</span>
<span class="t hb" style="font-size:16px;line-height:20px;color:#fff;font-weight:700;transform:translate(665.98px,180px) scaleX(0.8678);">STORY</span>
<span class="t hb" style="font-size:16px;line-height:20px;color:#fff;font-weight:700;transform:translate(663.00px,198px) scaleX(0.8995);">POINTS</span>
<span class="t hb" style="font-size:16px;line-height:20px;color:#fff;font-weight:700;transform:translate(754.69px,180px) scaleX(0.8290);">START</span>
<span class="t hb" style="font-size:16px;line-height:20px;color:#fff;font-weight:700;transform:translate(757.00px,198px) scaleX(0.9036);">DATE</span>
<span class="t hb" style="font-size:16px;line-height:20px;color:#fff;font-weight:700;transform:translate(843.56px,180px) scaleX(0.9433);">END</span>
<span class="t hb" style="font-size:16px;line-height:20px;color:#fff;font-weight:700;transform:translate(840.60px,198px) scaleX(0.8963);">DATE</span>
<span class="t hb" style="font-size:16px;line-height:20px;color:#fff;font-weight:700;transform:translate(912.24px,180px) scaleX(0.9606);">DURATION</span>
<span class="t" style="font-size:16px;line-height:20px;color:#fff;transform:translate(926.92px,198px) scaleX(0.9818);">in days</span>
<span class="t hb" style="font-size:16px;line-height:20px;color:#fff;font-weight:700;transform:translate(1017.99px,189px) scaleX(0.8367);">STATUS</span>
<span class="t hb" style="font-size:16px;line-height:20px;color:#fff;font-weight:700;transform:translate(1158.34px,189px) scaleX(0.8644);">PRIORITY</span>
<span class="t hb" style="font-size:16px;line-height:20px;color:#fff;font-weight:700;transform:translate(1260.37px,189px) scaleX(1.0605);">COMMENTS</span>
<svg style="left:50.5px;top:580px" width="8" height="18" viewBox="50.5 580 8 18" fill="none"><circle cx="50.6" cy="588.7" r="4" stroke="#7a7a7a" stroke-width="1.2" fill="#fff"/></svg>
<svg style="left:1526px;top:580px" width="10" height="18" viewBox="1526 580 10 18" fill="none"><circle cx="1536.4" cy="589" r="4" stroke="#7a7a7a" stroke-width="1.2" fill="#fff"/></svg>
<div style="left:0px;top:741.6px;width:1536px;height:9px;background:#f5f5f5;"></div>
<div style="left:1526.5px;top:118px;width:2px;height:2px;background:#8a8a8a;border-radius:1px;"></div>
<div id="menu" style="left:1287px;top:46px;width:239px;height:174px;background:#fff;border-radius:0 0 4px 4px;box-shadow:0 3px 10px rgba(0,0,0,.2),0 0 2px rgba(0,0,0,.12);"></div>
<div style="left:1287px;top:175px;width:239px;height:38.5px;background:#f3f2f1;"></div>
<div style="left:1298px;top:170px;width:218px;height:2px;background:#d6d4d2;"></div>
<span class="t" style="font-size:16px;line-height:20px;color:#242424;transform:translate(1331.51px,63px) scaleX(0.9748);">Share</span>
<span class="t" style="font-size:16px;line-height:20px;color:#242424;transform:translate(1331.24px,101px) scaleX(1.0121);">Copy Link</span>
<span class="t" style="font-size:16px;line-height:20px;color:#242424;transform:translate(1331.24px,140px) scaleX(1.0074);">Copy Link To This Sheet</span>
<span class="t" style="font-size:16px;line-height:20px;color:#242424;transform:translate(1330.73px,187px) scaleX(1.0126);">Manage Access</span>
<svg style="left:1180px;top:10px" width="356" height="215" viewBox="1180 10 356 215" fill="none">
<path d="M1195.9 23.8H1211.4V34.2H1201.6L1198.2 38V34.2H1195.9Z" stroke="#2b2b2b" stroke-width="1.3" stroke-linejoin="round"/>
<path d="M1319.6 39.6L1321.4 33.8L1332.6 22.6C1333.8 21.4 1335.6 21.6 1336.4 22.6C1337.4 23.6 1337.4 25.2 1336.4 26.2L1325.2 37.6Z" stroke="#2b2b2b" stroke-width="1.3" stroke-linejoin="round"/>
<path d="M1321.6 34L1325 37.4M1331.4 23.8L1335.2 27.6" stroke="#2b2b2b" stroke-width="1.1"/>
<path d="M1392.8 29.2L1398.1 34.6L1403.4 29.2" fill="none" stroke="#3a3a3a" stroke-width="1.2" stroke-linecap="round" stroke-linejoin="round"/>
<g transform="translate(1437 22.2)" stroke="#fff" stroke-width="1.3" stroke-linejoin="round" stroke-linecap="round"><path d="M0.6 7.2V18.1H15.3V13.2"/><path d="M4.4 11.6C5 7.6 8 5.2 12 5V2.2L17.6 7L12 11.8V9C8.8 8.8 6.2 9.6 4.4 11.6Z"/></g>
<path d="M1502.4 29.0L1507.9 34.8L1513.4 29.0" fill="none" stroke="#fff" stroke-width="1.3" stroke-linecap="round" stroke-linejoin="round"/>
<g transform="translate(1300.2 61.4)" stroke="#3a3a3a" stroke-width="1.2" stroke-linejoin="round" stroke-linecap="round"><path d="M0.6 7.2V18.1H15.3V13.2"/><path d="M4.4 11.6C5 7.6 8 5.2 12 5V2.2L17.6 7L12 11.8V9C8.8 8.8 6.2 9.6 4.4 11.6Z"/></g>
<rect x="1300.60" y="103.30" width="12.01" height="7.89" rx="3.94" stroke="#4a4a4a" stroke-width="1.5"/><rect x="1306.79" y="107.01" width="12.01" height="7.89" rx="3.94" stroke="#4a4a4a" stroke-width="1.5"/>
<path d="M1301.5 139.6H1317.9V150M1301.5 139.6V155.7H1308M1301.5 145H1317.9M1301.5 150.3H1306.5M1307 139.6V149M1312.4 139.6V147.6" stroke="#6a6a6a" stroke-width="1.2"/>
<rect x="1307.20" y="148.80" width="7.79" height="5.71" rx="2.86" stroke="#3f9be0" stroke-width="1.3"/><rect x="1311.21" y="151.49" width="7.79" height="5.71" rx="2.86" stroke="#3f9be0" stroke-width="1.3"/>
<path d="M1307.81 188.67L1308.07 185.79L1311.73 185.79L1311.99 188.67L1313.82 189.73L1316.44 188.51L1318.27 191.68L1315.91 193.34L1315.91 195.46L1318.27 197.12L1316.44 200.29L1313.82 199.07L1311.99 200.13L1311.73 203.01L1308.07 203.01L1307.81 200.13L1305.98 199.07L1303.36 200.29L1301.53 197.12L1303.89 195.46L1303.89 193.34L1301.53 191.68L1303.36 188.51L1305.98 189.73Z" stroke="#555" stroke-width="1.2" stroke-linejoin="round"/>
<circle cx="1309.9" cy="194.4" r="2.6" stroke="#555" stroke-width="1.2"/>
</svg>
</div>
</body>
</html>
